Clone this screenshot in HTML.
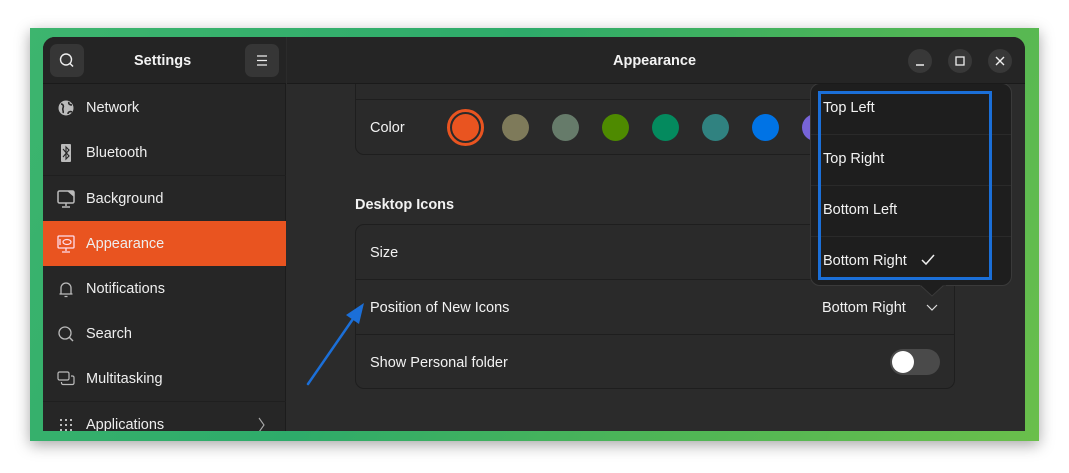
<!DOCTYPE html>
<html><head><meta charset="utf-8"><style>
*{margin:0;padding:0;box-sizing:border-box}
body{width:1069px;height:473px;background:#fff;position:relative;overflow:hidden;font-family:"Liberation Sans",sans-serif;color:#eee}
.bg{position:absolute;left:30px;top:28px;width:1009px;height:413px;background:linear-gradient(120deg,#3db56e 0%,#2eab6a 40%,#4fb556 70%,#6abf4b 100%);box-shadow:0 4px 14px rgba(0,0,0,.35)}
.win{position:absolute;left:43px;top:37px;width:982px;height:394px;border-radius:12px 12px 0 0;overflow:hidden;background:#2b2b2b}
.side{position:absolute;left:0;top:0;width:243px;height:394px;background:#262626;border-right:1px solid #1c1c1c;z-index:3}
.sh{position:absolute;left:0;top:0;width:243px;height:47px;background:#242424;border-bottom:1px solid #1a1a1a}
.ch{position:absolute;left:244px;top:0;right:0;height:47px;background:#252525;border-bottom:1px solid #1a1a1a;z-index:3}
.btn{position:absolute;width:34px;height:33px;border-radius:7px;background:#363636}
.t{position:absolute;font-size:14.5px;color:#f2f2f2}
.b{font-weight:bold}
.item{position:absolute;left:0;width:243px;height:45px;font-size:14.5px}
.item span{position:absolute;left:43px;top:15px}
.item svg{position:absolute;left:14px;top:14px}
.sel{background:#e95420}
.sep{position:absolute;left:0;width:243px;height:1px;background:#1f1f1f}
.card{position:absolute;left:312px;width:600px;border:1px solid #1e1e1e;border-radius:9px;background:#2a2a2a}
.row{position:absolute;left:0;width:100%;border-top:1px solid #1e1e1e}
.dot{position:absolute;width:27px;height:27px;border-radius:50%}
.wb{position:absolute;width:24px;height:24px;border-radius:50%;background:#383838;top:12px}
.pop{position:absolute;left:810px;top:83px;width:202px;height:203px;background:#1e1e1e;border:1px solid #3a3a3a;border-radius:10px}
.pi{position:absolute;left:12px;font-size:14.5px;color:#f2f2f2}
.psep{position:absolute;left:0;width:200px;height:1px;background:#2a2a2a}
</style></head><body>
<div class="bg"></div>
<div class="win">
 <div class="side">
  <div class="sh">
   <div class="btn" style="left:7px;top:7px"><svg width="34" height="33"><circle cx="16" cy="15.5" r="5.5" fill="none" stroke="#eee" stroke-width="1.4"/><line x1="20" y1="19.5" x2="23" y2="22.5" stroke="#eee" stroke-width="1.5"/></svg></div>
   <div class="t b" style="left:91px;top:16px">Settings</div>
   <div class="btn" style="left:202px;top:7px"><svg width="34" height="33"><path d="M12 12h10M12 16.5h10M12 21h10" stroke="#eee" stroke-width="1.3"/></svg></div>
  </div>
  <div class="item" style="top:48px"><svg width="18" height="18"><circle cx="9" cy="9" r="7.5" fill="#bbb"/><path d="M4 5c2 0 3 2 2 4s1 3 0 5M12 3c-1 2 1 3 3 3M11 15c0-2 2-3 4-2" stroke="#262626" stroke-width="1.6" fill="none"/></svg><span>Network</span></div>
  <div class="item" style="top:93px"><svg width="18" height="18"><rect x="4" y="0" width="10" height="18" rx="1" fill="#bbb"/><path d="M6 5l6 7-3 3V3l3 3-6 7" stroke="#262626" stroke-width="1.1" fill="none"/></svg><span>Bluetooth</span></div>
  <div class="sep" style="top:138px"></div>
  <div class="item" style="top:139px"><svg width="18" height="18"><rect x="1" y="1" width="16" height="12" rx="1.5" fill="none" stroke="#bbb" stroke-width="1.5"/><path d="M10 1h7v6z" fill="#bbb"/><path d="M9 13v3M5 17h8" stroke="#bbb" stroke-width="1.5"/></svg><span>Background</span></div>
  <div class="item sel" style="top:184px"><svg width="18" height="18"><rect x="1" y="1" width="16" height="12" rx="1" fill="none" stroke="#fde" stroke-width="1.3"/><ellipse cx="10" cy="7" rx="4" ry="2.5" fill="none" stroke="#fde" stroke-width="1.2"/><path d="M3 4v6M9 13v3M5 17h8" stroke="#fde" stroke-width="1.3"/></svg><span>Appearance</span></div>
  <div class="item" style="top:229px"><svg width="18" height="18"><path d="M4 14V8a5 5 0 0 1 10 0v6M2.5 14h13M7.5 16.5h3" stroke="#bbb" stroke-width="1.3" fill="none"/></svg><span>Notifications</span></div>
  <div class="item" style="top:274px"><svg width="18" height="18"><circle cx="8" cy="8" r="6" fill="none" stroke="#bbb" stroke-width="1.3"/><line x1="12.5" y1="12.5" x2="16" y2="16" stroke="#bbb" stroke-width="1.4"/></svg><span>Search</span></div>
  <div class="item" style="top:319px"><svg width="18" height="18"><rect x="1" y="2" width="11" height="8" rx="1.5" fill="none" stroke="#bbb" stroke-width="1.2"/><path d="M14 6h1.5a1.5 1.5 0 0 1 1.5 1.5V13a1.5 1.5 0 0 1-1.5 1.5H6A1.5 1.5 0 0 1 4.5 13v-1" stroke="#bbb" stroke-width="1.2" fill="none"/></svg><span>Multitasking</span></div>
  <div class="sep" style="top:364px"></div>
  <div class="item" style="top:365px"><svg width="18" height="18"><g fill="#bbb"><rect x="3" y="3" width="2" height="2"/><rect x="8" y="3" width="2" height="2"/><rect x="13" y="3" width="2" height="2"/><rect x="3" y="8" width="2" height="2"/><rect x="8" y="8" width="2" height="2"/><rect x="13" y="8" width="2" height="2"/><rect x="3" y="13" width="2" height="2"/><rect x="8" y="13" width="2" height="2"/><rect x="13" y="13" width="2" height="2"/></g></svg><span>Applications</span><svg style="left:214px;top:14px" width="10" height="18"><path d="M2 2l5 7-5 7" stroke="#aaa" stroke-width="1.1" fill="none"/></svg></div>
 </div>
 <div class="ch">
  <div class="t b" style="left:326px;top:16px">Appearance</div>
  <div class="wb" style="left:621px"><svg width="24" height="24"><line x1="8" y1="16" x2="16" y2="16" stroke="#eee" stroke-width="1.4"/></svg></div>
  <div class="wb" style="left:661px"><svg width="24" height="24"><rect x="8" y="8" width="8" height="8" fill="none" stroke="#eee" stroke-width="1.3"/></svg></div>
  <div class="wb" style="left:701px"><svg width="24" height="24"><path d="M8 8l8 8M16 8l-8 8" stroke="#eee" stroke-width="1.4"/></svg></div>
 </div>
 <div class="card" style="top:10px;height:108px">
  <div class="row" style="top:51px;height:56px"><div class="t" style="left:14px;top:20px">Color</div></div>
 </div>
 <div class="dot" style="left:404px;top:72px;width:37px;height:37px;border:3px solid #e95420;background:#2a2a2a"></div>
 <div class="dot" style="left:409px;top:77px;background:#e95420"></div>
 <div class="dot" style="left:459px;top:77px;background:#7e7a5a"></div>
 <div class="dot" style="left:509px;top:77px;background:#667b6a"></div>
 <div class="dot" style="left:559px;top:77px;background:#4e8a00"></div>
 <div class="dot" style="left:609px;top:77px;background:#048a5e"></div>
 <div class="dot" style="left:659px;top:77px;background:#308280"></div>
 <div class="dot" style="left:709px;top:77px;background:#0073e5"></div>
 <div class="dot" style="left:759px;top:77px;background:#7764d8"></div>
 <div class="t b" style="left:312px;top:160px">Desktop Icons</div>
 <div class="card" style="top:187px;height:165px">
  <div class="t" style="left:14px;top:20px">Size</div>
  <div class="row" style="top:54px;height:55px"><div class="t" style="left:14px;top:20px">Position of New Icons</div><div class="t" style="left:466px;top:20px">Bottom Right</div><svg style="position:absolute;left:570px;top:24px" width="12" height="8"><path d="M1 1l5 5 5-5" stroke="#ddd" stroke-width="1.2" fill="none"/></svg></div>
  <div class="row" style="top:109px;height:55px"><div class="t" style="left:14px;top:20px">Show Personal folder</div>
   <div style="position:absolute;left:534px;top:14px;width:50px;height:26px;border-radius:13px;background:#4a4a4a"><div style="position:absolute;left:2px;top:2px;width:22px;height:22px;border-radius:50%;background:#fff"></div></div></div>
 </div>
</div>
<div class="pop">
 <div class="psep" style="top:50px"></div><div class="psep" style="top:101px"></div><div class="psep" style="top:152px"></div>
 <div class="pi" style="top:16px">Top Left</div>
 <div class="pi" style="top:67px">Top Right</div>
 <div class="pi" style="top:118px">Bottom Left</div>
 <div class="pi" style="top:169px">Bottom Right</div>
 <svg style="position:absolute;left:109px;top:169px" width="16" height="14"><path d="M2 7l4 4 8-9" stroke="#eee" stroke-width="1.5" fill="none"/></svg>
 <div style="position:absolute;left:7px;top:7px;width:174px;height:189px;border:3px solid #1b6fd8"></div>
</div>
<svg style="position:absolute;left:920px;top:285px" width="26" height="13"><path d="M0 0L12 11L24 0" fill="#1e1e1e" stroke="#3a3a3a"/><rect x="0" y="-2" width="26" height="2.5" fill="#1e1e1e"/></svg>
<svg style="position:absolute;left:0;top:0" width="1069" height="473"><line x1="308" y1="384" x2="355" y2="316" stroke="#1b6fd8" stroke-width="2.5" stroke-linecap="round"/><path d="M364 303L346 315L359 324Z" fill="#1b6fd8"/></svg>
</body></html>
